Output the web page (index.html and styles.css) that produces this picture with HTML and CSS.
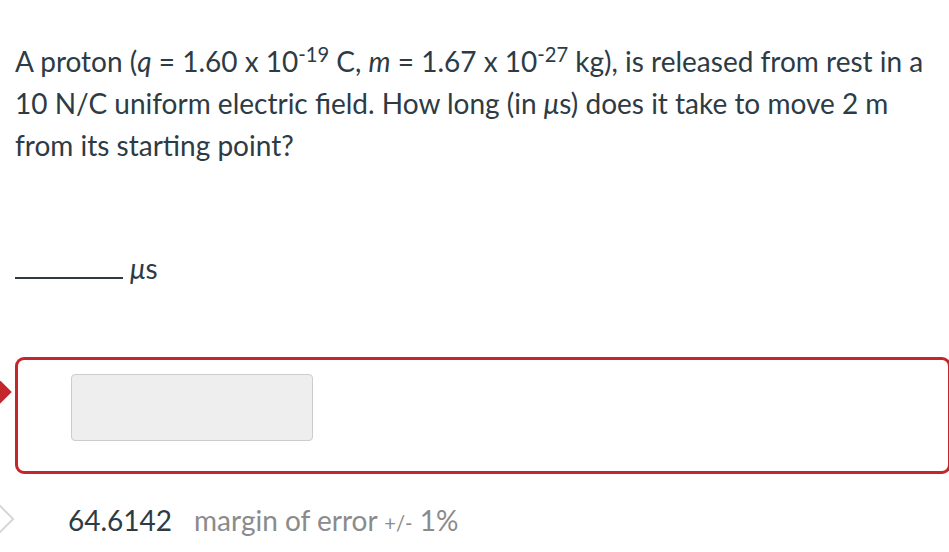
FILE: index.html
```html
<!DOCTYPE html>
<html>
<head>
<meta charset="utf-8">
<link rel="stylesheet" href="styles.css">
</head>
<body>
<div class="question">
  <p class="text">A proton (<i>q</i> = 1.60 x 10<sup>-19</sup> C, <i>m</i> = 1.67 x 10<sup>-27</sup> kg), is released from rest in a 10 N/C uniform electric field. How long (in <i>μ</i>s) does it take to move 2 m from its starting point?</p>
  <div class="blank-row"><span class="blank"></span><span class="unit"><i>μ</i>s</span></div>
  <div class="answer-wrap">
    <span class="marker-red"></span>
    <div class="answer-box"><div class="input"></div></div>
  </div>
  <div class="correct-row">
    <span class="marker-gray"></span>
    <span class="value">64.6142</span>
    <span class="margin">margin of error <small>+/-</small> 1%</span>
  </div>
</div>
</body>
</html>
```
FILE: styles.css
```css
html, body { margin: 0; padding: 0; background: #fff; }
body {
  font-family: Lato, "Open Sans", sans-serif;
  color: #2d3b45;
  width: 949px;
  height: 552px;
  overflow: hidden;
}
.question { position: relative; padding-top: 40px; }
.text {
  margin: 0;
  padding: 0 15px;
  font-size: 28px;
  line-height: 42px;
}
.text sup { font-size: 0.72em; line-height: 0; vertical-align: 0.5em; }
.blank-row {
  display: flex;
  align-items: flex-end;
  padding-left: 15px;
  margin-top: 87px;
  height: 30px;
  font-size: 28px;
}
.blank { display: inline-block; width: 108px; flex: none; border-bottom: 2px solid #2d3b45; margin-bottom: 4px; }
.unit { margin-left: 7px; line-height: 30px; }
.answer-wrap { position: relative; margin-top: 74px; padding-left: 15px; }
.answer-box {
  border: 3px solid #c5262b;
  border-radius: 9px;
  margin-right: -2px;
  padding: 14px 0 0 53px;
  box-sizing: border-box;
  height: 117px;
}
.input {
  width: 240px;
  height: 65px;
  background: #eeeeee;
  border: 1px solid #cccccc;
  border-radius: 4px;
}
.marker-red {
  position: absolute;
  left: -10px;
  top: 26px;
  width: 18px;
  height: 18px;
  background: #c5262b;
  transform: rotate(45deg);
}
.correct-row {
  position: relative;
  display: flex;
  align-items: baseline;
  padding-left: 68px;
  margin-top: 30px;
  font-size: 28px;
  line-height: 32px;
}
.marker-gray {
  position: absolute;
  left: -12px;
  top: 4px;
  width: 18px;
  height: 18px;
  border: 2px solid #d6d6d6;
  transform: rotate(45deg);
}
.value { color: #2d3b45; }
.margin { color: #8b8b8b; margin-left: 22px; }
.margin small { font-size: 0.72em; }
```
